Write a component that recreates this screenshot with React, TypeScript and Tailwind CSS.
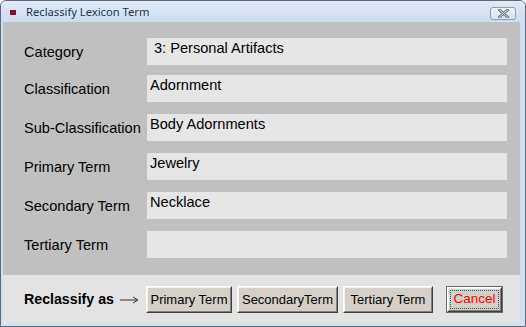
import React from "react";

const F = { fontFamily: '"Liberation Sans", Arial, sans-serif' };

function Row({ label, value, mt, pl = "pl-[3px]" }: { label: string; value: string; mt: string; pl?: string }) {
  return (
    <div className={`flex items-center ${mt}`}>
      <div className="w-[123px] text-[14.6px] leading-[16px] text-black whitespace-nowrap">{label}</div>
      <div className={`w-[360px] h-[27px] bg-[#e6e6e6] ${pl} pt-[2px] text-[14.6px] leading-[16px] text-black`}>{value}</div>
    </div>
  );
}

function Btn({ children, w }: { children: React.ReactNode; w: string }) {
  return (
    <div className={`${w} h-[27px] border border-t-white border-l-white border-r-[#404040] border-b-[#404040] bg-[#d4d0c8]`}>
      <div className="w-full h-full border border-t-[#f4f2ee] border-l-[#f4f2ee] border-r-[#808080] border-b-[#808080] flex items-center justify-center text-[13px] text-black whitespace-nowrap">
        {children}
      </div>
    </div>
  );
}

export default function App() {
  return (
    <div className="w-[526px] h-[327px] bg-white" style={F}>
      <div className="w-[526px] h-[327px] flex flex-col border border-[#5a6a7e] rounded-t-[6px] bg-[#d2e0ef] overflow-hidden">
        {/* Title bar */}
        <div className="h-[21px] flex items-start bg-gradient-to-b from-[#e1eaf5] to-[#cddcee] shrink-0">
          <div className="w-[6px] h-[5px] bg-[#8e0b2e] ml-[9px] mt-[9px]" />
          <div
            className="ml-[10px] mt-[3px] text-[11.2px] leading-[15px] text-[#1e3552]"
            style={{ fontFamily: '"Noto Sans", "DejaVu Sans", sans-serif' }}
          >
            Reclassify Lexicon Term
          </div>
          <div className="ml-auto mr-[9px] mt-[6px] w-[26px] h-[13px] rounded-[3px] border border-[#8c9db3] bg-gradient-to-b from-[#eef3fa] to-[#d6e2f0] flex items-center justify-center">
            <svg width="11" height="9" viewBox="0 0 11 9">
              <path d="M1.5 1 L9.5 8 M9.5 1 L1.5 8" stroke="#5d6a78" strokeWidth="2.6" strokeLinecap="square" />
              <path d="M1.5 1 L9.5 8 M9.5 1 L1.5 8" stroke="#eef2f7" strokeWidth="1" strokeLinecap="square" />
            </svg>
          </div>
        </div>

        {/* Body */}
        <div className="ml-[2px] mr-[5px] flex flex-col">
          <div className="h-[253px] bg-[#c0c0c0] pl-[21px] pt-[16px] flex flex-col">
            <Row label="Category" value="3: Personal Artifacts" mt="" pl="pl-[7px]" />
            <Row label="Classification" value="Adornment" mt="mt-[10px]" />
            <Row label="Sub-Classification" value="Body Adornments" mt="mt-[12px]" />
            <Row label="Primary Term" value="Jewelry" mt="mt-[12px]" />
            <Row label="Secondary Term" value="Necklace" mt="mt-[12px]" />
            <Row label="Tertiary Term" value="" mt="mt-[12px]" />
          </div>
          <div className="h-[48px] bg-[#e3e3e3] flex items-center pl-[21px] pt-[1px]">
            <span className="w-[96px] text-[14.2px] font-bold text-black whitespace-nowrap">Reclassify as</span>
            <svg className="mt-[1px]" width="19" height="8" viewBox="0 0 19 8">
              <path d="M0 4 H17" stroke="#333" strokeWidth="1" />
              <path d="M13 1 L18 4 L13 7" stroke="#333" strokeWidth="1" fill="none" />
            </svg>
            <div className="ml-[7px]">
              <Btn w="w-[86px]">Primary Term</Btn>
            </div>
            <div className="ml-[5px]">
              <Btn w="w-[101px]">SecondaryTerm</Btn>
            </div>
            <div className="ml-[5px]">
              <Btn w="w-[90px]">Tertiary Term</Btn>
            </div>
            <div className="ml-[13px] w-[57px] h-[27px] border border-[#6a6a6a] bg-[#d4d0c8]">
              <div className="w-full h-full border border-t-white border-l-white border-r-[#404040] border-b-[#404040]">
                <div className="w-full h-full border border-t-[#f4f2ee] border-l-[#f4f2ee] border-r-[#808080] border-b-[#808080] p-[1px]">
                  <div className="w-full h-full border border-dotted border-[#0a6b6b] bg-[#d4d0c8] flex items-center justify-center text-[13.5px] text-[#ff0000]">
                    Cancel
                  </div>
                </div>
              </div>
            </div>
          </div>
        </div>
      </div>
    </div>
  );
}
